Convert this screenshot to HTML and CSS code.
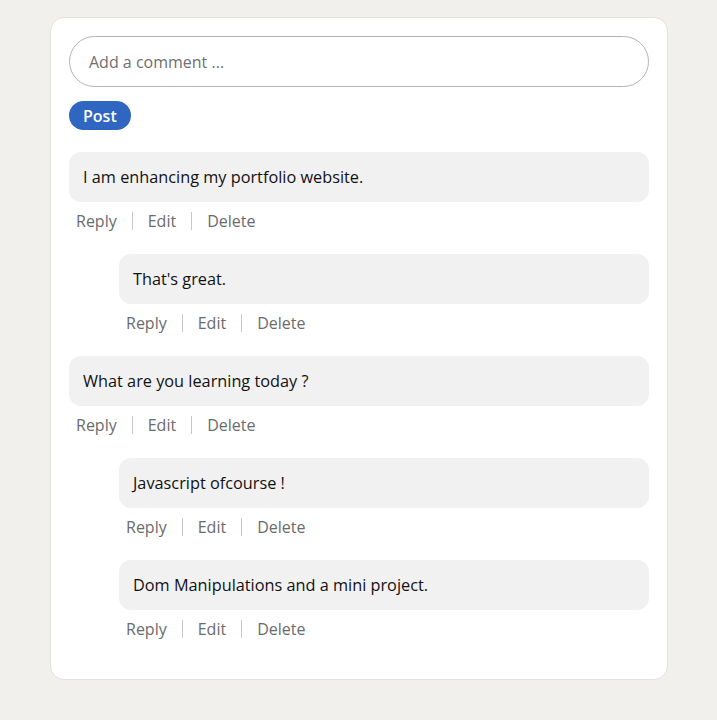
FILE: index.html
```html
<!DOCTYPE html>
<html>
<head>
<meta charset="utf-8">
<link rel="stylesheet" href="styles.css">
</head>
<body>
<div class="card">
  <div class="input">Add a comment ...</div>
  <button class="post">Post</button>
  <div class="thread">
    <div class="comment">
      <div class="bubble">I am enhancing my portfolio website.</div>
      <div class="actions"><span>Reply</span><i></i><span>Edit</span><i></i><span>Delete</span></div>
      <div class="replies">
        <div class="comment">
          <div class="bubble">That's great.</div>
          <div class="actions"><span>Reply</span><i></i><span>Edit</span><i></i><span>Delete</span></div>
        </div>
      </div>
    </div>
    <div class="comment">
      <div class="bubble">What are you learning today ?</div>
      <div class="actions"><span>Reply</span><i></i><span>Edit</span><i></i><span>Delete</span></div>
      <div class="replies">
        <div class="comment">
          <div class="bubble">Javascript ofcourse !</div>
          <div class="actions"><span>Reply</span><i></i><span>Edit</span><i></i><span>Delete</span></div>
        </div>
        <div class="comment">
          <div class="bubble">Dom Manipulations and a mini project.</div>
          <div class="actions"><span>Reply</span><i></i><span>Edit</span><i></i><span>Delete</span></div>
        </div>
      </div>
    </div>
  </div>
</div>
</body>
</html>
```

FILE: styles.css
```css
html, body {
  margin: 0;
  padding: 0;
  background: #f1f0ed;
  font-family: "Open Sans", "Noto Sans", sans-serif;
}
.card {
  box-sizing: border-box;
  width: 618px;
  margin: 17px 0 0 50px;
  background: #fff;
  border: 1px solid #e2e1de;
  border-radius: 14px;
  padding: 18px 18px 17px 18px;
}
.input {
  box-sizing: border-box;
  height: 51px;
  border: 1.5px solid #b4b4b4;
  border-radius: 26px;
  padding: 0 19px;
  display: flex;
  align-items: center;
  color: #6f6f6f;
  font-size: 16px;
}
.post {
  display: block;
  margin-top: 14px;
  height: 29px;
  padding: 0 14px;
  border: none;
  border-radius: 15px;
  background: #2f66c1;
  color: #fff;
  font-family: inherit;
  font-size: 16px;
  font-weight: 600;
}
.thread {
  margin-top: 22px;
}
.bubble {
  box-sizing: border-box;
  height: 50px;
  background: #f1f1f1;
  border-radius: 12px;
  padding: 0 14px;
  display: flex;
  align-items: center;
  color: #111;
  font-size: 16.3px;
}
.actions {
  display: flex;
  align-items: center;
  height: 22px;
  margin: 8px 0 22px 7px;
  color: #6b6b6b;
  font-size: 16px;
}
.actions i {
  width: 1px;
  height: 18px;
  background: #c8c8c8;
  margin: 0 15px;
}
.replies {
  margin-left: 50px;
}
```
